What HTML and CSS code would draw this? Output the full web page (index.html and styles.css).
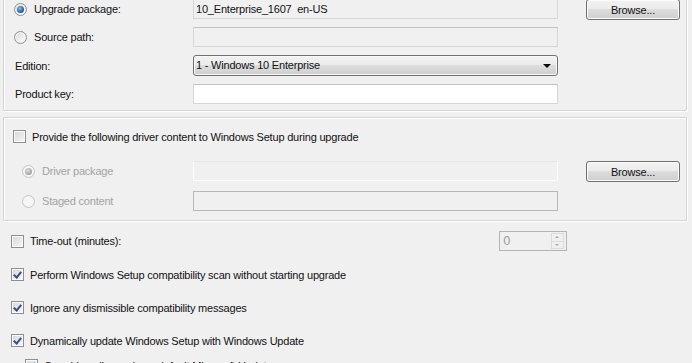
FILE: index.html
```html
<!DOCTYPE html>
<html lang="en">
<head>
    <meta charset="UTF-8">
    <title>Upgrade Operating System</title>
    <link rel="stylesheet" href="styles.css">
</head>
<body>

<div class="dialog">
    <div class="group group-source">
        <div class="field-grid">
            <label class="opt"><span class="radio checked"></span>Upgrade package:</label>
            <div class="textbox readonly">10_Enterprise_1607&nbsp; en-US</div>
            <button class="btn">Browse...</button>

            <label class="opt"><span class="radio"></span>Source path:</label>
            <div class="textbox readonly"></div>
            <span></span>

            <label class="plain">Edition:</label>
            <div class="combo">1 - Windows 10 Enterprise<span class="combo-arrow"></span></div>
            <span></span>

            <label class="plain">Product key:</label>
            <div class="textbox"></div>
            <span></span>
        </div>
    </div>

    <div class="group group-driver">
        <label class="check-row first">
            <span class="checkbox"></span>Provide the following driver content to Windows Setup during upgrade
        </label>
        <div class="field-grid driver-grid">
            <label class="opt disabled"><span class="radio checked disabled"></span>Driver package</label>
            <div class="textbox faint"></div>
            <button class="btn">Browse...</button>

            <label class="opt disabled"><span class="radio disabled"></span>Staged content</label>
            <div class="textbox dim"></div>
            <span></span>
        </div>
    </div>

    <div class="options">
        <div class="timeout-row">
            <label class="check-row"><span class="checkbox"></span>Time-out (minutes):</label>
            <div class="spinbox">
                <span class="spin-value">0</span>
                <span class="spin-buttons">
                    <span class="spin-up"></span>
                    <span class="spin-down"></span>
                </span>
            </div>
        </div>
        <label class="check-row"><span class="checkbox checked"></span>Perform Windows Setup compatibility scan without starting upgrade</label>
        <label class="check-row"><span class="checkbox checked"></span>Ignore any dismissible compatibility messages</label>
        <label class="check-row"><span class="checkbox checked"></span>Dynamically update Windows Setup with Windows Update</label>
        <label class="check-row nested"><span class="checkbox checked"></span>Override policy and use default Microsoft Update</label>
    </div>
</div>

</body>
</html>
```

FILE: styles.css
```css
body {
    margin: 0;
    background-color: #f0f0f0;
    font-family: 'Liberation Sans', Arial, sans-serif;
    font-size: 11px;
    letter-spacing: -0.2px;
    color: #111;
    overflow: hidden;
}
.dialog {
    padding: 0 5px 0 3px;
}
.group {
    border: 1px solid #d5d5d5;
    box-shadow: inset 1px 1px 0 #fff, 1px 1px 0 #fff;
}
.group-source {
    margin-top: -12px;
    padding: 10px 0 6px 10px;
}
.group-driver {
    margin-top: 6px;
    padding: 11px 0 9px 10px;
}
.field-grid {
    display: grid;
    grid-template-columns: 151px 365px 94px;
    column-gap: 28px;
    row-gap: 8px;
    align-items: center;
}
.driver-grid {
    margin-top: 17px;
    row-gap: 10px;
}
.driver-grid .opt {
    padding-left: 8px;
}
.opt {
    display: flex;
    align-items: center;
    gap: 7px;
}
.plain {
    padding-left: 1px;
}
.disabled {
    color: #a3a3a3;
}

/* radio buttons */
.radio {
    width: 11px;
    height: 11px;
    border: 1px solid #8f8f8f;
    border-radius: 50%;
    background: linear-gradient(135deg, #d9d9d9, #ffffff);
    box-shadow: inset 0 0 0 1px #f4f4f4;
    position: relative;
    flex: none;
}
.radio.checked::after {
    content: "";
    position: absolute;
    left: 2px;
    top: 2px;
    width: 7px;
    height: 7px;
    border-radius: 50%;
    background: radial-gradient(circle at 40% 35%, #8fc0ec, #2b69a8 55%, #1b3e6e);
}
.radio.disabled {
    border-color: #c6c6c6;
    background: #f6f6f6;
}
.radio.checked.disabled::after {
    background: radial-gradient(circle at 40% 35%, #e0e0e0, #a9a9a9 60%, #989898);
}

/* checkboxes */
.check-row {
    display: flex;
    align-items: center;
    gap: 6px;
    height: 15px;
}
.checkbox {
    width: 11px;
    height: 11px;
    border: 1px solid #8e8f8f;
    background: linear-gradient(135deg, #d6d6d6, #f8f8f8);
    box-shadow: inset 0 0 0 1px #fbfbfb;
    position: relative;
    flex: none;
}
.checkbox.checked::after {
    content: "";
    position: absolute;
    left: 3px;
    top: 1px;
    width: 3px;
    height: 6px;
    border: solid #34508a;
    border-width: 0 2px 2px 0;
    transform: rotate(40deg);
}
.group-driver .first {
    margin-left: -1px;
}

/* text inputs */
.textbox {
    box-sizing: border-box;
    height: 20px;
    line-height: 18px;
    padding-left: 2px;
    border: 1px solid #d6d6d6;
    border-top-color: #c2c2c2;
    background-color: #fff;
}
.textbox.readonly {
    background-color: #f0f0f0;
}
.textbox.faint {
    background-color: #f0f0f0;
    border-color: #fcfcfc;
    border-top-color: #e6e6e6;
}
.textbox.dim {
    background-color: #f0f0f0;
    border-color: #b7b7b7;
}

/* combo box */
.combo {
    box-sizing: border-box;
    height: 21px;
    line-height: 19px;
    padding-left: 2px;
    border: 1px solid #707070;
    border-radius: 3px;
    background: linear-gradient(#f2f2f2, #ebebeb 50%, #dddddd 50%, #cfcfcf);
    box-shadow: inset 0 0 0 1px #f8f8f8;
    position: relative;
}
.combo-arrow {
    position: absolute;
    right: 6px;
    top: 8px;
    border-left: 4px solid transparent;
    border-right: 4px solid transparent;
    border-top: 4px solid #000;
}

/* buttons */
.btn {
    box-sizing: border-box;
    height: 21px;
    margin-bottom: -1px;
    align-self: start;
    padding: 0;
    font-family: inherit;
    font-size: 11px;
    letter-spacing: -0.2px;
    color: #111;
    border: 1px solid #707070;
    border-radius: 3px;
    background: linear-gradient(#f2f2f2, #ebebeb 50%, #dddddd 50%, #cfcfcf);
    box-shadow: inset 0 0 0 1px #fcfcfc;
}

/* bottom options */
.options {
    padding: 10px 0 0 8px;
    display: flex;
    flex-direction: column;
    gap: 18px;
}
.timeout-row {
    display: grid;
    grid-template-columns: 488px 68px;
    align-items: center;
    height: 20px;
    margin-bottom: -2px;
}
.spinbox {
    box-sizing: border-box;
    height: 20px;
    border: 1px solid #b4b4b4;
    display: flex;
    justify-content: space-between;
    align-items: center;
    padding: 1px 2px 1px 3px;
}
.spin-value {
    color: #a0a0a0;
    font-family: 'DejaVu Sans', sans-serif;
    font-size: 12px;
}
.spin-buttons {
    width: 13px;
    height: 16px;
    display: flex;
    flex-direction: column;
    border: 1px solid #dcdcdc;
    box-sizing: border-box;
}
.spin-up,
.spin-down {
    flex: 1;
    position: relative;
}
.spin-up {
    border-bottom: 1px solid #dcdcdc;
}
.spin-up::after,
.spin-down::after {
    content: "";
    position: absolute;
    left: 3px;
    border-left: 2px solid transparent;
    border-right: 2px solid transparent;
}
.spin-up::after {
    top: 2px;
    border-bottom: 2px solid #a8a8a8;
}
.spin-down::after {
    top: 2px;
    border-top: 2px solid #a8a8a8;
}
.nested {
    margin-left: 14px;
    margin-top: -8px;
}
```
